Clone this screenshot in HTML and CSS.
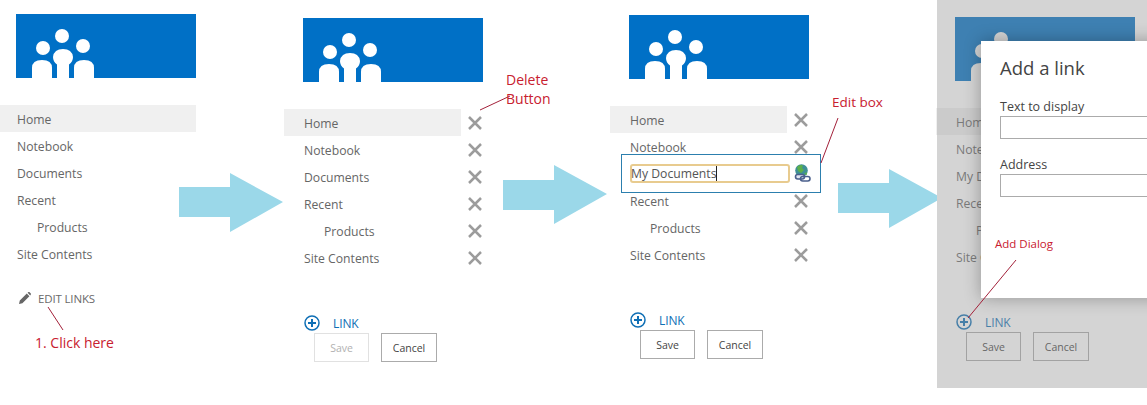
FILE: index.html
```html
<!DOCTYPE html>
<html lang="en">
<head>
  <meta charset="UTF-8">
  <title>Edit links steps</title>
  <link rel="stylesheet" href="styles.css">
</head>
<body>
  <svg width="0" height="0" class="defs">
    <symbol id="logo" viewBox="0 0 180 64">
      <circle cx="46" cy="22" r="7"/>
      <circle cx="27" cy="34" r="7"/>
      <circle cx="67" cy="32" r="7"/>
      <path d="M16 64V54q0-8 10-8t10 8V64z"/>
      <path d="M58 64V54q0-8 10-8t10 8V64z"/>
      <path d="M41 64V50.500Q37 47.500 37 43Q38 35 47 35T57 43Q57 47.500 53 50.500V64z"/>
    </symbol>
    <symbol id="cross" viewBox="0 0 14 14">
      <path d="M1 1L13 13M13 1L1 13"/>
    </symbol>
    <symbol id="plus" viewBox="0 0 16 16">
      <circle cx="8" cy="8" r="7" fill="none" stroke-width="1.500"/>
      <path d="M8 4V12M4 8H12" stroke-width="2"/>
    </symbol>
  </svg>

  <div class="canvas">
    <!-- big arrows between the steps -->
    <svg class="arrows" width="1147" height="405">
      <polygon points="179,187 230,187 230,173 283,202 230,232 230,217 179,217"/>
      <polygon points="503,180 554,180 554,165 607,194 554,224 554,210 503,210"/>
      <polygon points="838,183 889,183 889,169 937,195.300 937,200.800 889,228 889,213 838,213"/>
    </svg>

    <!-- step 1 -->
    <div class="panel panel-one">
      <svg class="logo"><use href="#logo"/></svg>
      <ul class="nav">
        <li class="nav-row"><a class="nav-link active">Home</a></li>
        <li class="nav-row"><a class="nav-link">Notebook</a></li>
        <li class="nav-row"><a class="nav-link">Documents</a></li>
        <li class="nav-row"><a class="nav-link">Recent</a></li>
        <li class="nav-row"><a class="nav-link sub">Products</a></li>
        <li class="nav-row"><a class="nav-link">Site Contents</a></li>
      </ul>
      <div class="edit-links">
        <svg width="12" height="12" viewBox="0 0 12 12"><path d="M0 12L.8 8.600L7.800 1.600L10.400 4.200L3.400 11.200zM8.600.8L9.400 0Q10 -.2 10.600 .2L11.800 1.400Q12.200 2 11.800 2.600L11.200 3.400z"/></svg>
        <span>EDIT LINKS</span>
      </div>
    </div>

    <!-- step 2 -->
    <div class="panel panel-two">
      <svg class="logo"><use href="#logo"/></svg>
      <ul class="nav">
        <li class="nav-row"><a class="nav-link active">Home</a><svg class="cross"><use href="#cross"/></svg></li>
        <li class="nav-row"><a class="nav-link">Notebook</a><svg class="cross"><use href="#cross"/></svg></li>
        <li class="nav-row"><a class="nav-link">Documents</a><svg class="cross"><use href="#cross"/></svg></li>
        <li class="nav-row"><a class="nav-link">Recent</a><svg class="cross"><use href="#cross"/></svg></li>
        <li class="nav-row"><a class="nav-link sub">Products</a><svg class="cross"><use href="#cross"/></svg></li>
        <li class="nav-row"><a class="nav-link">Site Contents</a><svg class="cross"><use href="#cross"/></svg></li>
      </ul>
      <div class="add-link"><svg class="plus"><use href="#plus"/></svg><span>LINK</span></div>
      <div class="actions">
        <button class="btn" disabled>Save</button>
        <button class="btn">Cancel</button>
      </div>
    </div>

    <!-- step 3 -->
    <div class="panel panel-three">
      <svg class="logo"><use href="#logo"/></svg>
      <ul class="nav">
        <li class="nav-row"><a class="nav-link active">Home</a><svg class="cross"><use href="#cross"/></svg></li>
        <li class="nav-row"><a class="nav-link">Notebook</a><svg class="cross"><use href="#cross"/></svg></li>
        <li class="nav-row">
          <div class="edit-box">
            <div class="edit-input">My Documents<span class="caret"></span></div>
            <svg class="globe" width="17" height="18" viewBox="0 0 17 18">
              <circle cx="7.500" cy="6.500" r="6.300" fill="#3f8f96"/>
              <path d="M3 3Q6 0 9 1.500L8 4L10 6L7 9L4 7z" fill="#5cb04a"/>
              <path d="M10 10L12.500 8L13 11z" fill="#5cb04a"/>
              <rect x="1.500" y="10.500" width="9" height="4.500" rx="2.200" fill="#dfe6f2" stroke="#4a5f8c" stroke-width="1.600"/>
              <rect x="6.500" y="12.500" width="9.500" height="4.500" rx="2.200" fill="none" stroke="#4a5f8c" stroke-width="1.600"/>
            </svg>
          </div>
        </li>
        <li class="nav-row"><a class="nav-link">Recent</a><svg class="cross"><use href="#cross"/></svg></li>
        <li class="nav-row"><a class="nav-link sub">Products</a><svg class="cross"><use href="#cross"/></svg></li>
        <li class="nav-row"><a class="nav-link">Site Contents</a><svg class="cross"><use href="#cross"/></svg></li>
      </ul>
      <div class="add-link"><svg class="plus"><use href="#plus"/></svg><span>LINK</span></div>
      <div class="actions">
        <button class="btn">Save</button>
        <button class="btn">Cancel</button>
      </div>
    </div>

    <!-- step 4, page behind the dialog -->
    <div class="panel panel-four">
      <svg class="logo"><use href="#logo"/></svg>
      <ul class="nav">
        <li class="nav-row"><a class="nav-link active">Home</a></li>
        <li class="nav-row"><a class="nav-link">Notebook</a></li>
        <li class="nav-row"><a class="nav-link">My Documents</a></li>
        <li class="nav-row"><a class="nav-link">Recent</a></li>
        <li class="nav-row"><a class="nav-link sub">Products</a></li>
        <li class="nav-row"><a class="nav-link">Site Contents</a></li>
      </ul>
      <div class="add-link"><svg class="plus"><use href="#plus"/></svg><span>LINK</span></div>
      <div class="actions">
        <button class="btn">Save</button>
        <button class="btn">Cancel</button>
      </div>
    </div>
    <div class="overlay"></div>
    <div class="dialog">
      <h2>Add a link</h2>
      <label class="field-label">Text to display</label>
      <div class="field"></div>
      <label class="field-label">Address</label>
      <div class="field"></div>
    </div>

    <!-- red notes on top of everything -->
    <svg class="notes" width="1147" height="405">
      <path d="M48 307L63 330M480 110L510 96M821 163L838 118M1016 260L968 318"/>
    </svg>
    <span class="note note-click">1. Click here</span>
    <span class="note note-delete">Delete<br>Button</span>
    <span class="note note-edit">Edit box</span>
    <span class="note note-dialog">Add Dialog</span>
  </div>
</body>
</html>
```

FILE: styles.css
```css
* {
  box-sizing: border-box;
}
body {
  margin: 0;
  background: white;
  font-family: "Open Sans", "Liberation Sans", sans-serif;
  color: #666;
}
.defs {
  position: absolute;
}
.canvas {
  position: relative;
  width: 1147px;
  height: 405px;
  overflow: hidden;
}
.arrows, .notes {
  position: absolute;
  left: 0;
  top: 0;
}
.arrows polygon {
  fill: #9bd8e9;
}
.notes path {
  fill: none;
  stroke: #a3213a;
  stroke-width: 1;
}

.panel {
  position: absolute;
  width: 205px;
}
.panel-one {
  left: -3px;
  top: 14px;
}
.panel-two {
  left: 284px;
  top: 18px;
}
.panel-three {
  left: 610px;
  top: 15px;
}
.panel-four {
  left: 936px;
  top: 17px;
}

.logo {
  display: block;
  width: 180px;
  height: 64px;
  margin-left: 19px;
  background: #0070c6;
  fill: white;
}
.nav {
  list-style: none;
  margin: 27px 0 0;
  padding: 0;
}
.nav-row {
  display: flex;
  align-items: center;
  position: relative;
  height: 27px;
}
.nav-link {
  width: 177px;
  height: 27px;
  padding-left: 20px;
  font-size: 12.200px;
  line-height: 29px;
}
.panel-one .nav-link {
  width: 199px;
}
.nav-link.active {
  background: #f0f0f0;
}
.nav-link.sub {
  padding-left: 40px;
}
.cross {
  width: 14px;
  height: 14px;
  margin-left: 7px;
  fill: none;
  stroke: #9c9c9c;
  stroke-width: 2.500;
}

.edit-links {
  display: flex;
  align-items: center;
  height: 20px;
  margin-top: 21px;
  padding-left: 22px;
  font-size: 11.500px;
  letter-spacing: -0.15px;
  color: #6a6a6a;
}
.edit-links svg {
  fill: #666;
  margin-right: 7px;
}

.edit-box {
  position: absolute;
  left: 11px;
  top: -6px;
  width: 200px;
  height: 39px;
  display: flex;
  align-items: center;
  padding-left: 8px;
  background: white;
  border: 1px solid #2c7fae;
}
.edit-input {
  width: 160px;
  height: 19px;
  border: 2px solid #e8cb8f;
  border-radius: 3px;
  font-size: 12.200px;
  line-height: 15px;
  text-indent: -1px;
  color: #555;
}
.caret {
  display: inline-block;
  width: 1px;
  height: 15px;
  vertical-align: top;
  background: #222;
}
.globe {
  margin-left: 4px;
  margin-top: -1px;
}

.add-link {
  display: flex;
  align-items: center;
  height: 20px;
  margin-top: 42px;
  padding-left: 20px;
  font-size: 12px;
  letter-spacing: -0.1px;
  color: #0f6fb5;
}
.plus {
  width: 16px;
  height: 16px;
  margin-right: 13px;
  stroke: #0f6fb5;
}
.actions {
  display: flex;
  gap: 12px;
  margin-left: 30px;
}
.btn {
  width: 55px;
  height: 29px;
  padding: 0;
  background: white;
  border: 1px solid #ababab;
  font-family: inherit;
  font-size: 10.500px;
  color: #444;
}
.btn:last-child {
  width: 56px;
}
.btn:disabled {
  border-color: #e1e1e1;
  color: #b1b1b1;
}

.overlay {
  position: absolute;
  left: 937px;
  top: 0;
  width: 210px;
  height: 388px;
  background: rgba(150, 150, 150, 0.41);
}
.dialog {
  position: absolute;
  left: 981px;
  top: 41px;
  width: 300px;
  height: 257px;
  padding: 13px 19px;
  background: white;
  box-shadow: 0 0 16px rgba(0, 0, 0, 0.3);
}
.dialog h2 {
  margin: 0 0 16px;
  font-size: 18.500px;
  font-weight: 400;
  line-height: 28px;
  color: #444;
}
.field-label {
  display: block;
  font-size: 12.500px;
  line-height: 18px;
  color: #444;
}
.field {
  width: 260px;
  height: 23px;
  margin: 0 0 17px;
  border: 1px solid #ababab;
}

.note {
  position: absolute;
  font-size: 14px;
  line-height: 19px;
  color: #c8202f;
}
.note-click {
  left: 35px;
  top: 333px;
}
.note-delete {
  left: 506px;
  top: 70px;
}
.note-edit {
  left: 832px;
  top: 93px;
  font-size: 13.500px;
}
.note-dialog {
  left: 995px;
  top: 234px;
  font-size: 11.500px;
}
```
